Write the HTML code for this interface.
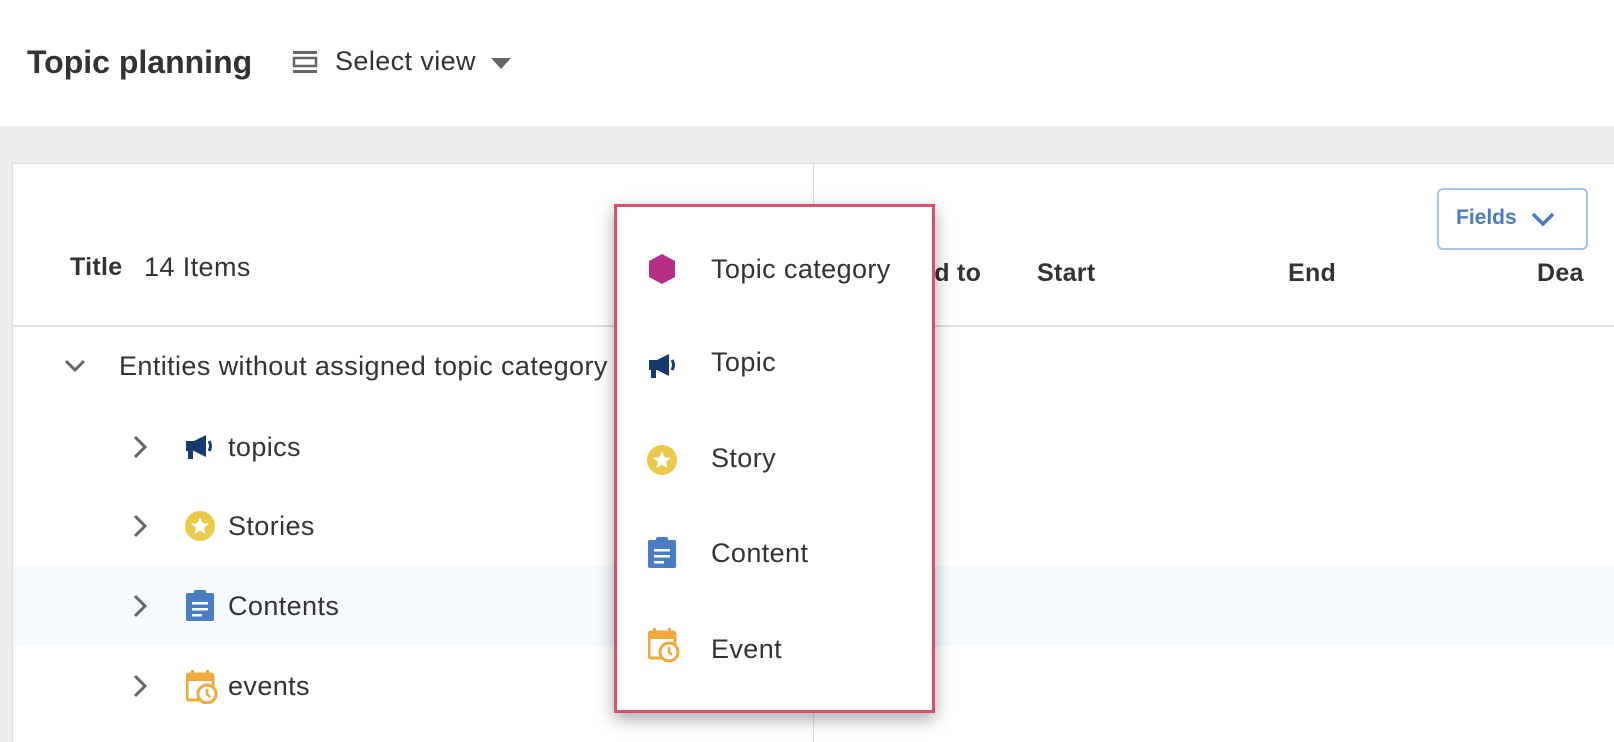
<!DOCTYPE html>
<html style="overflow:hidden;width:1614px;height:742px"><head><style>
*{box-sizing:border-box;margin:0;padding:0}
body{width:1614px;height:742px;overflow:hidden;background:#eeeeee;font-family:"Liberation Sans",sans-serif;color:#333;position:relative}
.hdr{position:absolute;left:0;top:0;width:1614px;height:126px;background:#fff}
.abs{position:absolute;white-space:nowrap}
.panel{position:absolute;left:12px;top:163px;width:1602px;height:579px;background:#fff;border:1px solid #ddd;border-right:none;border-bottom:none}
.t{font-size:27px;line-height:30px;letter-spacing:0.4px}
.b{font-weight:bold;font-size:25px;letter-spacing:0.3px}
.menu{position:absolute;left:614px;top:204px;width:321px;height:509px;background:#fff;border:3px solid #d9506f;box-shadow:0 6px 16px rgba(0,0,0,.35)}
</style></head><body>
<div class="hdr">
<div class="abs" style="left:27px;top:44px;font-size:32px;font-weight:bold;color:#333">Topic planning</div>
<svg class="abs" style="left:292px;top:50px" width="26" height="24" viewBox="0 0 26 24"><rect x="1" y="1" width="24" height="3" fill="#666"/><rect x="2" y="8" width="22" height="8" fill="none" stroke="#666" stroke-width="2.5"/><rect x="1" y="20" width="24" height="3" fill="#666"/></svg>
<div class="abs t" style="left:335px;top:46px">Select view</div>
<svg class="abs" style="left:491px;top:58px" width="20" height="12"><path d="M0 0H20L10 11Z" fill="#666"/></svg>
</div>
<div class="panel">
<div class="abs" style="left:0;top:161px;width:1602px;height:2px;background:#ddd"></div>
<div class="abs" style="left:800px;top:0;width:1px;height:579px;background:#ddd"></div>
<div class="abs" style="left:0;top:402px;width:1602px;height:80px;background:#f6f9fd"></div>
</div>
<div class="abs t b" style="left:70px;top:252px">Title</div>
<div class="abs t" style="left:144px;top:252px">14 Items</div>
<div class="abs t b" style="left:920px;top:258px">ed to</div>
<div class="abs t b" style="left:1037px;top:258px">Start</div>
<div class="abs t b" style="left:1288px;top:258px">End</div>
<div class="abs t b" style="left:1537px;top:258px">Dea</div>
<div class="abs" style="left:1437px;top:188px;width:151px;height:62px;border:2px solid #a9c2e6;border-radius:6px"></div>
<div class="abs" style="left:1456px;top:206px;font-size:21px;font-weight:bold;color:#4a7cc4">Fields</div>
<svg class="abs" style="left:1531px;top:212px" width="24" height="16"><path d="M2 2L12 12L22 2" fill="none" stroke="#4a7cc4" stroke-width="3.5"/></svg>

<svg class="abs" style="left:64px;top:359px" width="22" height="14"><path d="M2 2L11 11L20 2" fill="none" stroke="#666" stroke-width="3"/></svg>
<div class="abs t" style="left:119px;top:351px">Entities without assigned topic category</div>

<svg class="abs" style="left:132px;top:435px" width="16" height="24"><path d="M3 2L13 12L3 22" fill="none" stroke="#666" stroke-width="3"/></svg>
<svg class="abs" style="left:184px;top:434px" width="32" height="26" viewBox="0 0 32 26"><path d="M2 7H10L22 1V23L10 17H9V25H4V17H2Z" fill="#173a6e"/><path d="M25 7Q28 12 25 17" stroke="#173a6e" stroke-width="3" fill="none"/></svg>
<div class="abs t" style="left:228px;top:432px">topics</div>

<svg class="abs" style="left:132px;top:514px" width="16" height="24"><path d="M3 2L13 12L3 22" fill="none" stroke="#666" stroke-width="3"/></svg>
<svg class="abs" style="left:185px;top:511px" width="30" height="30" viewBox="0 0 30 30"><circle cx="15" cy="15" r="15" fill="#edc94b"/><path d="M15 6L17.6 12.2L24 12.7L19.1 16.8L20.6 23L15 19.7L9.4 23L10.9 16.8L6 12.7L12.4 12.2Z" fill="#fff"/></svg>
<div class="abs t" style="left:228px;top:511px">Stories</div>

<svg class="abs" style="left:132px;top:594px" width="16" height="24"><path d="M3 2L13 12L3 22" fill="none" stroke="#666" stroke-width="3"/></svg>
<svg class="abs" style="left:186px;top:589px" width="28" height="32" viewBox="0 0 28 32"><rect x="0" y="4" width="28" height="28" rx="2" fill="#4a7cc4"/><rect x="8" y="1" width="12" height="7" rx="2" fill="#4a7cc4"/><rect x="6" y="13" width="16" height="2.5" fill="#fff"/><rect x="6" y="19" width="16" height="2.5" fill="#fff"/><rect x="6" y="25" width="10" height="2.5" fill="#fff"/></svg>
<div class="abs t" style="left:228px;top:591px">Contents</div>

<svg class="abs" style="left:132px;top:674px" width="16" height="24"><path d="M3 2L13 12L3 22" fill="none" stroke="#666" stroke-width="3"/></svg>
<svg class="abs" style="left:186px;top:670px" width="32" height="34" viewBox="0 0 32 34"><rect x="1" y="4" width="26" height="26" rx="2" fill="none" stroke="#f0a93a" stroke-width="3"/><rect x="1" y="4" width="26" height="7" fill="#f0a93a"/><rect x="5" y="0" width="3" height="6" fill="#f0a93a"/><rect x="20" y="0" width="3" height="6" fill="#f0a93a"/><circle cx="21" cy="24" r="9" fill="#fff" stroke="#f0a93a" stroke-width="3"/><path d="M21 19V24L24 27" stroke="#f0a93a" stroke-width="2.5" fill="none"/></svg>
<div class="abs t" style="left:228px;top:671px">events</div>

<div class="menu">
<svg class="abs" style="left:30px;top:46px" width="30" height="32" viewBox="0 0 30 32"><path d="M15 1L28 8V24L15 31L2 24V8Z" fill="#b52e87"/></svg>
<div class="abs t" style="left:94px;top:47px">Topic category</div>
<svg class="abs" style="left:30px;top:146px" width="32" height="26" viewBox="0 0 32 26"><path d="M2 7H10L22 1V23L10 17H9V25H4V17H2Z" fill="#173a6e"/><path d="M25 7Q28 12 25 17" stroke="#173a6e" stroke-width="3" fill="none"/></svg>
<div class="abs t" style="left:94px;top:140px">Topic</div>
<svg class="abs" style="left:30px;top:238px" width="30" height="30" viewBox="0 0 30 30"><circle cx="15" cy="15" r="15" fill="#edc94b"/><path d="M15 6L17.6 12.2L24 12.7L19.1 16.8L20.6 23L15 19.7L9.4 23L10.9 16.8L6 12.7L12.4 12.2Z" fill="#fff"/></svg>
<div class="abs t" style="left:94px;top:236px">Story</div>
<svg class="abs" style="left:31px;top:329px" width="28" height="32" viewBox="0 0 28 32"><rect x="0" y="4" width="28" height="28" rx="2" fill="#4a7cc4"/><rect x="8" y="1" width="12" height="7" rx="2" fill="#4a7cc4"/><rect x="6" y="13" width="16" height="2.5" fill="#fff"/><rect x="6" y="19" width="16" height="2.5" fill="#fff"/><rect x="6" y="25" width="10" height="2.5" fill="#fff"/></svg>
<div class="abs t" style="left:94px;top:331px">Content</div>
<svg class="abs" style="left:31px;top:421px" width="32" height="34" viewBox="0 0 32 34"><rect x="1" y="4" width="26" height="26" rx="2" fill="none" stroke="#f0a93a" stroke-width="3"/><rect x="1" y="4" width="26" height="7" fill="#f0a93a"/><rect x="5" y="0" width="3" height="6" fill="#f0a93a"/><rect x="20" y="0" width="3" height="6" fill="#f0a93a"/><circle cx="21" cy="24" r="9" fill="#fff" stroke="#f0a93a" stroke-width="3"/><path d="M21 19V24L24 27" stroke="#f0a93a" stroke-width="2.5" fill="none"/></svg>
<div class="abs t" style="left:94px;top:427px">Event</div>
</div>
</body></html>
